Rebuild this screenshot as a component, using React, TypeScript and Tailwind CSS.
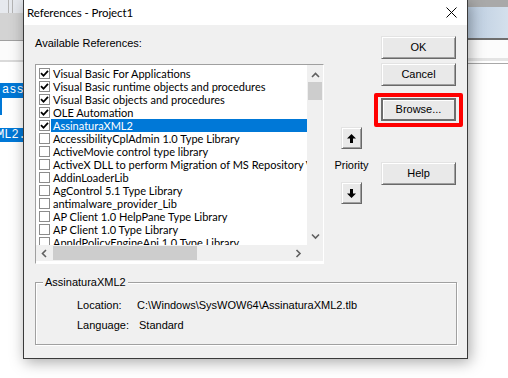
import React from "react";

const items: { label: string; checked: boolean; selected?: boolean }[] = [
  { label: "Visual Basic For Applications", checked: true },
  { label: "Visual Basic runtime objects and procedures", checked: true },
  { label: "Visual Basic objects and procedures", checked: true },
  { label: "OLE Automation", checked: true },
  { label: "AssinaturaXML2", checked: true, selected: true },
  { label: "AccessibilityCplAdmin 1.0 Type Library", checked: false },
  { label: "ActiveMovie control type library", checked: false },
  { label: "ActiveX DLL to perform Migration of MS Repository V1", checked: false },
  { label: "AddinLoaderLib", checked: false },
  { label: "AgControl 5.1 Type Library", checked: false },
  { label: "antimalware_provider_Lib", checked: false },
  { label: "AP Client 1.0 HelpPane Type Library", checked: false },
  { label: "AP Client 1.0 Type Library", checked: false },
  { label: "AppIdPolicyEngineApi 1.0 Type Library", checked: false },
];

function Chevron({ dir }: { dir: "up" | "down" | "left" | "right" }) {
  const pts: Record<string, string> = {
    up: "1,5 4.5,1.5 8,5",
    down: "1,1.5 4.5,5 8,1.5",
    left: "5,1 1.5,4.5 5,8",
    right: "1.5,1 5,4.5 1.5,8",
  };
  const vert = dir === "up" || dir === "down";
  return (
    <svg width={vert ? 9 : 7} height={vert ? 7 : 9} viewBox={vert ? "0 0 9 7" : "0 0 7 9"}>
      <polyline points={pts[dir]} fill="none" stroke="#606060" strokeWidth="1.6" />
    </svg>
  );
}

function Btn({ children, focused }: { children: React.ReactNode; focused?: boolean }) {
  return (
    <div
      className={
        "w-[75px] h-[23px] flex items-center justify-center bg-[#e9e9e9] text-[11px] text-black " +
        (focused
          ? "border-2 border-[#6d6d6d] shadow-[inset_1px_1px_0_#ffffff]"
          : "border border-t-[#e3e3e3] border-l-[#e3e3e3] border-r-[#696969] border-b-[#696969] shadow-[inset_1px_1px_0_#ffffff,inset_-1px_-1px_0_#a0a0a0]")
      }
    >
      {children}
    </div>
  );
}

function ArrowBtn({ up }: { up?: boolean }) {
  return (
    <div className="w-[21px] h-[22px] flex items-center justify-center bg-[#e9e9e9] border border-t-[#e3e3e3] border-l-[#e3e3e3] border-r-[#696969] border-b-[#696969] shadow-[inset_1px_1px_0_#ffffff,inset_-1px_-1px_0_#a0a0a0]">
      <svg width="9" height="9" viewBox="0 0 9 9">
        {up ? (
          <path d="M4.5 0 L9 4.5 L6 4.5 L6 9 L3 9 L3 4.5 L0 4.5 Z" fill="#000" />
        ) : (
          <path d="M4.5 9 L9 4.5 L6 4.5 L6 0 L3 0 L3 4.5 L0 4.5 Z" fill="#000" />
        )}
      </svg>
    </div>
  );
}

export default function App() {
  return (
    <div className="relative w-[508px] h-[378px] overflow-hidden bg-white font-['Liberation_Sans',sans-serif]">
      {/* background editor windows */}
      <div className="flex h-full">
        <div className="w-[23px] flex flex-col">
          <div className="h-[13px] bg-[#e6e9ee] flex">
            <div className="w-[8px]" />
            <div className="w-[4px] border-l border-[#b4b4b4]" />
            <div className="w-[4px] border-l border-[#b4b4b4]" />
          </div>
          <div className="h-[27px] bg-[#d3d3d3]" />
          <div className="h-px bg-[#a0a0a0]" />
          <div className="h-[19px] bg-[#fbfbfb]" />
          <div className="h-[2px] bg-[#dadada]" />
          <div className="h-[21px] bg-white" />
          <div className="h-[15px] bg-[#0078d7] text-white font-['Liberation_Mono',monospace] text-[12px] leading-[15px] pl-[2px] overflow-hidden whitespace-nowrap">
            ass
          </div>
          <div className="h-[17px] flex">
            <div className="w-[2px] bg-[#0078d7]" />
          </div>
          <div className="h-[13px] bg-white" />
          <div className="h-[14px] bg-[#0078d7] text-white font-['Liberation_Mono',monospace] text-[12px] leading-[14px] overflow-hidden whitespace-nowrap">
            <span className="ml-[-3px]">ML2.</span>
          </div>
          <div className="flex-1 bg-white" />
        </div>
        <div className="flex-1" />
        <div className="w-[40px] flex flex-col">
          <div className="h-[7px] bg-[#a9a9a9]" />
          <div className="h-[31px] bg-gradient-to-r from-[#bccde0] to-[#d4e0ec]" />
          <div className="h-[2px] bg-[#6e6e6e]" />
          <div className="h-[18px] bg-[#fcfcfc]" />
          <div className="h-[3px] bg-[#e4e4e4]" />
          <div className="h-[2px] bg-white" />
          <div className="h-px bg-[#a8a8a8]" />
          <div className="flex-1 bg-white" />
        </div>
      </div>

      {/* dialog window */}
      <div className="absolute left-[23px] top-0 w-[445px] h-[359px] flex flex-col border-l border-r border-b border-[#3a3a3a] bg-[#f0f0f0] shadow-[2px_3px_14px_rgba(0,0,0,0.35)]">
        <div className="h-[25px] bg-white flex items-center justify-between pl-[3px] pr-[10px]">
          <span className="text-[11.5px] tracking-[-0.1px] text-black font-['Lato',sans-serif]">References - Project1</span>
          <svg width="11" height="11" viewBox="0 0 11 11">
            <path d="M0.5 0.5 L10.5 10.5 M10.5 0.5 L0.5 10.5" stroke="#000" strokeWidth="1" />
          </svg>
        </div>

        <div className="flex-1 pl-[11px] pr-[10px] pt-[11px] text-[11px] text-black">
          <div className="flex items-start">
            {/* left column */}
            <div className="w-[289px] flex flex-col">
              <div className="mt-[1px] h-[13px] leading-[13px]">Available References:</div>
              <div className="mt-[14px] h-[200px] flex flex-col border border-t-[#a0a0a0] border-l-[#a0a0a0] border-r-[#ffffff] border-b-[#ffffff] bg-white">
                <div className="flex h-[180px]">
                  <div className="flex-1 overflow-hidden pt-[2px] font-['Lato',sans-serif]">
                    {items.map((it) => (
                      <div key={it.label} className="h-[13px] flex items-center whitespace-nowrap">
                        <div className="ml-[3px] w-[11px] h-[11px] shrink-0 border border-[#8c8c8c] bg-white flex items-center justify-center">
                          {it.checked && (
                            <svg width="9" height="9" viewBox="0 0 9 9">
                              <path d="M1 4.2 L3.5 6.8 L8 1.8" fill="none" stroke="#000" strokeWidth="1.8" />
                            </svg>
                          )}
                        </div>
                        <div
                          className={
                            "ml-[1px] h-[13px] leading-[13px] pl-[2px] flex-1 " +
                            (it.selected ? "bg-[#0078d7] text-white" : "text-black")
                          }
                        >
                          {it.label}
                        </div>
                      </div>
                    ))}
                  </div>
                  <div className="w-[16px] bg-[#f0f0f0] flex flex-col">
                    <div className="h-[17px] pt-[3px] flex items-center justify-center">
                      <Chevron dir="up" />
                    </div>
                    <div className="h-[18px] mx-[1px] bg-[#cdcdcd]" />
                    <div className="flex-1" />
                    <div className="h-[17px] flex items-center justify-center">
                      <Chevron dir="down" />
                    </div>
                  </div>
                </div>
                <div className="h-[16px] flex bg-[#f0f0f0]">
                  <div className="w-[17px] flex items-center justify-center">
                    <Chevron dir="left" />
                  </div>
                  <div className="w-[144px] my-[1px] bg-[#cdcdcd]" />
                  <div className="flex-1" />
                  <div className="w-[17px] flex items-center justify-center">
                    <Chevron dir="right" />
                  </div>
                  <div className="w-[16px] bg-[#f0f0f0]" />
                </div>
              </div>
            </div>

            {/* priority column */}
            <div className="ml-[9px] w-[37px] flex flex-col items-center mt-[91px]">
              <ArrowBtn up />
              <div className="h-[33px] flex items-center justify-center whitespace-nowrap">Priority</div>
              <ArrowBtn />
            </div>

            {/* buttons column */}
            <div className="ml-[11px] w-[75px] flex flex-col">
              <Btn>OK</Btn>
              <div className="mt-[4px]">
                <Btn>Cancel</Btn>
              </div>
              <div className="mt-[12px] relative">
                <Btn focused>Browse...</Btn>
                <div className="absolute left-[-7px] top-[-5px] right-[-7px] bottom-[-6px] border-4 border-[#ff0000] rounded-[2px]" />
              </div>
              <div className="mt-[41px]">
                <Btn>Help</Btn>
              </div>
            </div>
          </div>

          {/* info group */}
          <div className="relative mt-[18px] w-[422px] h-[63px] border border-[#a0a0a0] shadow-[inset_1px_1px_0_#ffffff,1px_1px_0_#ffffff] pt-[16px] pl-[41px]">
            <div className="absolute left-[7px] top-[-7px] px-[2px] bg-[#f0f0f0] leading-[13px]">AssinaturaXML2</div>
            <div className="flex h-[13px] leading-[13px]">
              <span className="w-[60px]">Location:</span>
              <span>C:\Windows\SysWOW64\AssinaturaXML2.tlb</span>
            </div>
            <div className="flex h-[13px] leading-[13px] mt-[7px]">
              <span className="w-[62px]">Language:</span>
              <span>Standard</span>
            </div>
          </div>
        </div>
      </div>
    </div>
  );
}
